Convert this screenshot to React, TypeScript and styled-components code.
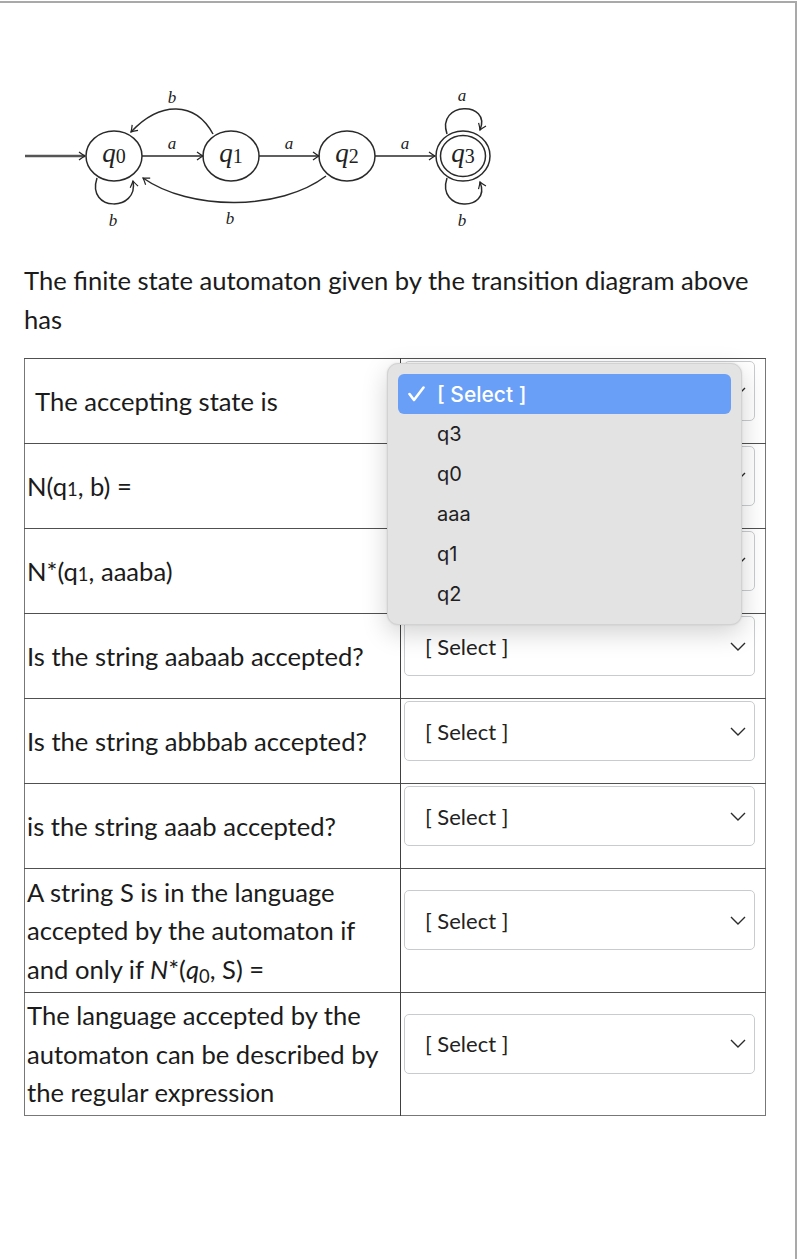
import React from 'react';
import styled, { createGlobalStyle } from 'styled-components';

const GlobalStyle = createGlobalStyle`
  html, body {
    margin: 0;
    padding: 0;
    background: #ffffff;
  }
  body {
    font-family: Lato, 'Noto Sans', sans-serif;
    color: #1b1b1b;
  }
`;

const Page = styled.div`
  width: 797px;
  min-height: 1258px;
  margin-top: 1px;
  border-top: 2px solid #a9a9a9;
  border-right: 2px solid #a9a9a9;
  padding-left: 24px;
  box-sizing: border-box;
`;

const Diagram = styled.svg`
  display: block;
  margin: 76px 0 0 -4px;
`;

const Lead = styled.p`
  margin: 22px 0 20px;
  font-size: 25.6px;
  line-height: 38.5px;
  width: 740px;
`;

const Table = styled.table`
  border-collapse: collapse;
  width: 742px;
  table-layout: fixed;
  border: 1px solid #777;
`;

const Row = styled.tr`
  border-top: 1px solid #505050;
`;

interface QuestionProps {
  $indent?: number;
}

const Question = styled.td<QuestionProps>`
  width: 376px;
  box-sizing: border-box;
  padding: 3.5px 2px 3.5px ${(p) => 2 + (p.$indent || 0)}px;
  font-size: 25.6px;
  line-height: 38.5px;
  vertical-align: middle;
  border-right: 1px solid #404040;
`;

const AnswerCell = styled.td`
  padding: 2px 3px;
  vertical-align: middle;
`;

const SelectWrap = styled.div`
  position: relative;
`;

const SelectBox = styled.div`
  display: flex;
  align-items: center;
  justify-content: space-between;
  width: 351px;
  height: 60px;
  margin-bottom: 20px;
  padding: 0 8px 0 20px;
  box-sizing: border-box;
  border: 1px solid #c9cccf;
  border-radius: 5px;
  background: #fff;
  font-size: 22px;
  color: #222;
`;

const Popup = styled.ul`
  position: absolute;
  left: -17px;
  top: 2px;
  width: 355px;
  margin: 0;
  padding: 10px 10px;
  box-sizing: border-box;
  list-style: none;
  background: #e3e3e3;
  border: 1px solid #d2d2d2;
  border-radius: 11px;
  box-shadow: 0 8px 26px rgba(0, 0, 0, 0.18), 0 0 2px rgba(0, 0, 0, 0.12);
  font-family: Inter, 'Liberation Sans', sans-serif;
  font-size: 20px;
  color: #1f1f1f;
  z-index: 5;
`;

interface OptionProps {
  $active?: boolean;
}

const Option = styled.li<OptionProps>`
  display: flex;
  align-items: center;
  height: 40px;
  padding-left: 39px;
  position: relative;
  border-radius: 6px;
  background: ${(p) => (p.$active ? '#6a9ff7' : 'transparent')};
  color: ${(p) => (p.$active ? '#ffffff' : '#1f1f1f')};
  font-size: ${(p) => (p.$active ? '21px' : '20px')};
  font-weight: ${(p) => (p.$active ? 500 : 400)};
`;

const Check = styled.svg`
  position: absolute;
  left: 10px;
  top: 12px;
`;

interface SubProps {
  $drop?: boolean;
}

const Sub = styled.span<SubProps>`
  font-size: 0.72em;
  vertical-align: ${(p) => (p.$drop ? '-0.2em' : 'baseline')};
  line-height: 0;
`;

const Ital = styled.i`
  font-style: italic;
`;

const Chevron = () => (
  <svg width="16" height="9" viewBox="0 0 16 9">
    <polyline points="1,1 8,8 15,1" fill="none" stroke="#2b2b2b" strokeWidth="1.4" />
  </svg>
);

const Select = () => (
  <SelectBox>
    <span>[ Select ]</span>
    <Chevron />
  </SelectBox>
);

const serif = "'Liberation Serif', 'DejaVu Serif', serif";

const Label = ({ x, y, children }: { x: number; y: number; children: React.ReactNode }) => (
  <text
    x={x}
    y={y}
    textAnchor="middle"
    dominantBaseline="central"
    fontFamily={serif}
    fontStyle="italic"
    fontSize={17}
    fill="#222"
  >
    {children}
  </text>
);

const StateName = ({ x, n }: { x: number; n: number }) => (
  <text x={x} y={161} textAnchor="middle" fontFamily={serif} fontSize={27} fill="#222">
    <tspan fontStyle="italic">q</tspan>
    <tspan fontSize={20} dy={1}>
      {n}
    </tspan>
  </text>
);

const Automaton = () => (
  <Diagram width={500} height={160} viewBox="20 78 500 160">
    <defs>
      <marker id="tip" markerWidth="10" markerHeight="10" refX="8" refY="5" orient="auto" markerUnits="userSpaceOnUse">
        <path d="M2,1 Q6,4 8,5 Q6,6 2,9" fill="none" stroke="#222" strokeWidth="1.2" />
      </marker>
    </defs>
    <g fill="none" stroke="#2a2a2a" strokeWidth="1.5">
      <path d="M25 155 L85 155" strokeWidth="2.4" stroke="#555" markerEnd="url(#tip)" />
      <path d="M142 155 L203 155" markerEnd="url(#tip)" />
      <path d="M259 155 L319 155" markerEnd="url(#tip)" />
      <path d="M375 155 L435 155" markerEnd="url(#tip)" />
      <path d="M213 133 C 195 100, 160 100, 131 131" markerEnd="url(#tip)" />
      <path d="M326 175 C 280 210, 190 210, 143 177" markerEnd="url(#tip)" />
      <path d="M97 177 C 86 211, 139 211, 133 180" markerEnd="url(#tip)" />
      <path d="M447 133 C 436 100, 492 100, 480 129" markerEnd="url(#tip)" />
      <path d="M447 177 C 436 211, 492 211, 480 181" markerEnd="url(#tip)" />
      <ellipse cx={114} cy={155} rx={28} ry={25} />
      <ellipse cx={231} cy={155} rx={28} ry={25} />
      <ellipse cx={347} cy={155} rx={28} ry={25} />
      <ellipse cx={463} cy={155} rx={27} ry={25} />
      <ellipse cx={463} cy={155} rx={22.5} ry={20.5} />
    </g>
    <StateName x={114} n={0} />
    <StateName x={231} n={1} />
    <StateName x={347} n={2} />
    <StateName x={463} n={3} />
    <Label x={172} y={142}>a</Label>
    <Label x={289} y={142}>a</Label>
    <Label x={405} y={142}>a</Label>
    <Label x={462} y={94}>a</Label>
    <Label x={172} y={96}>b</Label>
    <Label x={113} y={219}>b</Label>
    <Label x={230} y={217}>b</Label>
    <Label x={462} y={219}>b</Label>
  </Diagram>
);

const options = ['q3', 'q0', 'aaa', 'q1', 'q2'];

const Dropdown = () => (
  <Popup>
    <Option $active>
      <Check width="17" height="16" viewBox="0 0 17 16">
        <polyline points="1.5,8 6,14 15.5,1.5" fill="none" stroke="#fff" strokeWidth="2.6" strokeLinecap="round" strokeLinejoin="round" />
      </Check>
      [ Select ]
    </Option>
    {options.map((o) => (
      <Option key={o}>{o}</Option>
    ))}
  </Popup>
);

const App = () => (
  <Page>
    <GlobalStyle />
    <Automaton />
    <Lead>The finite state automaton given by the transition diagram above has</Lead>
    <Table>
      <tbody>
        <Row>
          <Question $indent={8}>The accepting state is</Question>
          <AnswerCell>
            <SelectWrap>
              <Select />
              <Dropdown />
            </SelectWrap>
          </AnswerCell>
        </Row>
        <Row>
          <Question>
            N(q<Sub>1</Sub>, b) =
          </Question>
          <AnswerCell>
            <Select />
          </AnswerCell>
        </Row>
        <Row>
          <Question>
            N*(q<Sub>1</Sub>, aaaba)
          </Question>
          <AnswerCell>
            <Select />
          </AnswerCell>
        </Row>
        <Row>
          <Question>Is the string aabaab accepted?</Question>
          <AnswerCell>
            <Select />
          </AnswerCell>
        </Row>
        <Row>
          <Question>Is the string abbbab accepted?</Question>
          <AnswerCell>
            <Select />
          </AnswerCell>
        </Row>
        <Row>
          <Question>is the string aaab accepted?</Question>
          <AnswerCell>
            <Select />
          </AnswerCell>
        </Row>
        <Row>
          <Question>
            A string S is in the language accepted by the automaton if and only if <Ital>N</Ital>*(
            <Ital>q</Ital>
            <Sub $drop>0</Sub>, S) =
          </Question>
          <AnswerCell>
            <Select />
          </AnswerCell>
        </Row>
        <Row>
          <Question>The language accepted by the automaton can be described by the regular expression</Question>
          <AnswerCell>
            <Select />
          </AnswerCell>
        </Row>
      </tbody>
    </Table>
  </Page>
);

export default App;
